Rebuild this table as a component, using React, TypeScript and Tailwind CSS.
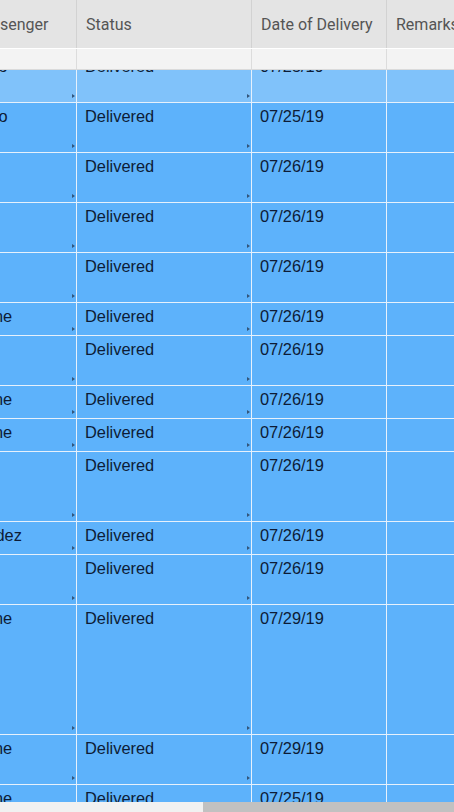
import React from "react";

type Row = { h: string; name: string; date: string };

const rows: Row[] = [
  { h: "h-[50px]", name: "Gino", date: "07/25/19" },
  { h: "h-[50px]", name: "Gino", date: "07/25/19" },
  { h: "h-[50px]", name: "", date: "07/26/19" },
  { h: "h-[50px]", name: "", date: "07/26/19" },
  { h: "h-[50px]", name: "", date: "07/26/19" },
  { h: "h-[33px]", name: "Rene", date: "07/26/19" },
  { h: "h-[50px]", name: "", date: "07/26/19" },
  { h: "h-[33px]", name: "Rene", date: "07/26/19" },
  { h: "h-[33px]", name: "Rene", date: "07/26/19" },
  { h: "h-[70px]", name: "", date: "07/26/19" },
  { h: "h-[33px]", name: "Valdez", date: "07/26/19" },
  { h: "h-[50px]", name: "", date: "07/26/19" },
  { h: "h-[130px]", name: "Rene", date: "07/29/19" },
  { h: "h-[50px]", name: "Rene", date: "07/29/19" },
  { h: "h-[50px]", name: "Rene", date: "07/25/19" },
];

function Marker() {
  return (
    <span className="absolute right-[1px] bottom-[4px] w-0 h-0 border-y-[2px] border-y-transparent border-l-[3px] border-l-[#34557a]" />
  );
}

export default function App() {
  const bodyFont = { fontFamily: '"Liberation Sans", Arial, sans-serif' };
  return (
    <div className="w-[454px] h-[812px] overflow-hidden flex flex-col bg-white">
      <div
        className="flex flex-col flex-1 overflow-hidden"
        style={{ fontFamily: "Roboto, sans-serif" }}
      >
        {/* header */}
        <div className="flex h-[49px] shrink-0 bg-[#e4e4e4] border-b border-white text-[16px] text-[#555555]">
          <div className="-ml-[36px] w-[113px] shrink-0 flex items-center pl-[9px] pt-[2px] border-r border-[#d2d2d2]">
            Passenger
          </div>
          <div className="w-[175px] shrink-0 flex items-center pl-[9px] pt-[2px] border-r border-[#d2d2d2]">
            Status
          </div>
          <div className="w-[135px] shrink-0 flex items-center pl-[9px] pt-[2px] border-r border-[#d2d2d2]">
            Date of Delivery
          </div>
          <div className="w-[160px] shrink-0 flex items-center pl-[9px] pt-[2px] whitespace-nowrap">
            Remarks
          </div>
        </div>
        {/* filter row */}
        <div className="flex h-[21px] shrink-0 bg-[#f3f3f3] border-b border-[#dadada]">
          <div className="-ml-[36px] w-[113px] shrink-0 border-r border-[#dcdcdc]" />
          <div className="w-[175px] shrink-0 border-r border-[#dcdcdc]" />
          <div className="w-[135px] shrink-0 border-r border-[#dcdcdc]" />
          <div className="w-[160px] shrink-0" />
        </div>
        {/* body */}
        <div className="flex-1 overflow-hidden bg-[#5db2fb]">
          <div className="-mt-[17px] flex flex-col" style={bodyFont}>
            {rows.map((r, i) => (
              <div
                key={i}
                className={`flex shrink-0 ${r.h} border-b border-[#e6f1fc] text-[16.4px] leading-[18px] text-[#0d1c36] ${
                  i === 0 ? "bg-[#80c2fa]" : "bg-[#5db2fb]"
                }`}
              >
                <div className="relative -ml-[36px] w-[113px] shrink-0 pl-[9px] pt-[4px] border-r border-[#e6f1fc] whitespace-nowrap overflow-hidden">
                  {r.name}
                  <Marker />
                </div>
                <div className="relative w-[175px] shrink-0 pl-[8px] pt-[4px] border-r border-[#e6f1fc]">
                  Delivered
                  <Marker />
                </div>
                <div className="w-[135px] shrink-0 pl-[8px] pt-[4px] border-r border-[#e6f1fc]">
                  {r.date}
                </div>
                <div className="w-[160px] shrink-0" />
              </div>
            ))}
          </div>
        </div>
      </div>
      {/* horizontal scrollbar */}
      <div className="flex h-[10px] shrink-0 bg-[#f1f1f1]">
        <div className="ml-[203px] flex-1 bg-[#c1c1c1]" />
      </div>
    </div>
  );
}
